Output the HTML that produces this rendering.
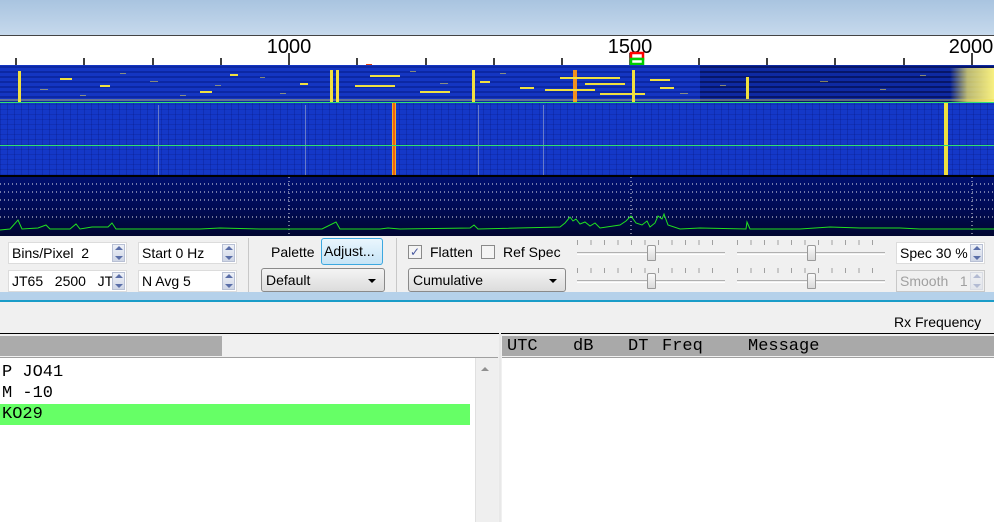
<!DOCTYPE html>
<html><head><meta charset="utf-8"><style>
*{margin:0;padding:0;box-sizing:border-box}
body{width:994px;height:522px;overflow:hidden;background:#f0f0f0;font-family:"Liberation Sans",sans-serif;position:relative}
.abs{position:absolute}
.sb{position:absolute;background:#fff;border:1px solid #dcdcdc;font-size:14px;line-height:20px;padding-left:3px;color:#000;height:22px}
.spin{position:absolute;right:1px;top:1px;width:13px;height:18px;background:linear-gradient(#eef1f8,#cfd6e6);border:1px solid #b8c0d4}
.spin:before{content:"";position:absolute;left:2px;top:1px;border:4px solid transparent;border-bottom:4px solid #5a6ea8;border-top:0}
.spin:after{content:"";position:absolute;left:2px;bottom:1px;border:4px solid transparent;border-top:4px solid #5a6ea8;border-bottom:0}
.combo{position:absolute;height:24px;border:1px solid #8a8a8a;border-radius:3px;background:linear-gradient(#f4f4f4,#dcdcdc);font-size:14px;line-height:22px;padding-left:4px}
.combo:after{content:"";position:absolute;right:8px;top:10px;border:4px solid transparent;border-top:4px solid #000;border-bottom:0}
.trk{position:absolute;height:3px;border-top:1px solid #b0b0b0;border-bottom:1px solid #fff;width:148px}
.thumb{position:absolute;width:9px;height:16px;background:linear-gradient(#fafafa,#dadada);border:1px solid #9a9a9a;border-radius:2px 2px 1px 1px}
.ticks{position:absolute;height:5px;width:148px;background:repeating-linear-gradient(90deg,#a0a0a0 0 1px,transparent 1px 13.5px)}
.mono{font-family:"Liberation Mono",monospace;font-size:17px}
</style></head><body>
<div class="abs" style="left:0;top:0;width:994px;height:35px;background:linear-gradient(#a9c4e0,#c6d9ec)"></div>
<div class="abs" style="left:0;top:35px;width:994px;height:30px;background:#fff;border-top:1px solid #444"></div>
<svg class="abs" style="left:0;top:35px" width="994" height="30">
<g stroke="#000" stroke-width="1.5">
<line x1="16" y1="23" x2="16" y2="30"/><line x1="84" y1="23" x2="84" y2="30"/><line x1="153" y1="23" x2="153" y2="30"/><line x1="221" y1="23" x2="221" y2="30"/><line x1="289" y1="18" x2="289" y2="30"/><line x1="357" y1="23" x2="357" y2="30"/><line x1="426" y1="23" x2="426" y2="30"/><line x1="494" y1="23" x2="494" y2="30"/><line x1="562" y1="23" x2="562" y2="30"/><line x1="630" y1="18" x2="630" y2="30"/><line x1="699" y1="23" x2="699" y2="30"/><line x1="767" y1="23" x2="767" y2="30"/><line x1="835" y1="23" x2="835" y2="30"/><line x1="904" y1="23" x2="904" y2="30"/><line x1="972" y1="18" x2="972" y2="30"/></g>
<g font-family="Liberation Sans" font-size="20" fill="#000" text-anchor="middle"><text x="289" y="18">1000</text><text x="630" y="18">1500</text><text x="971" y="18">2000</text></g>
<rect x="631" y="18" width="12" height="6" fill="#fff" stroke="#f00" stroke-width="2.5"/><rect x="631" y="24" width="12" height="5" fill="#fff" stroke="#0c0" stroke-width="2.5"/>
<rect x="366" y="29" width="6" height="2" fill="#e04010"/>
</svg>
<div class="abs" style="left:0;top:65px;width:994px;height:110px;background:#1438c8"></div>
<div class="abs" style="left:0;top:65px;width:994px;height:38px;background:repeating-linear-gradient(0deg,#0c28a4 0 2px,#1436c2 2px 5px)"></div>
<div class="abs" style="left:700px;top:65px;width:294px;height:38px;background:repeating-linear-gradient(0deg,#050e50 0 2px,#0c2494 2px 5px);opacity:.7"></div>
<div class="abs" style="left:0;top:103px;width:994px;height:72px;background:repeating-linear-gradient(90deg,rgba(0,0,80,.18) 0 1px,transparent 1px 7px),repeating-linear-gradient(0deg,rgba(0,0,80,.15) 0 1px,transparent 1px 5px)"></div>
<svg class="abs" style="left:0;top:65px" width="994" height="110">
<defs><linearGradient id="yb" x1="0" x2="1"><stop offset="0" stop-color="#e8e060" stop-opacity="0"/><stop offset=".4" stop-color="#e8e070" stop-opacity=".8"/><stop offset="1" stop-color="#f8f080"/></linearGradient></defs>
<rect x="950" y="3" width="44" height="35" fill="url(#yb)"/>
<g fill="#f0e040">
<rect x="18" y="6" width="3" height="32"/><rect x="330" y="5" width="3" height="32"/><rect x="336" y="5" width="3" height="33"/><rect x="472" y="5" width="3" height="33"/><rect x="573" y="5" width="4" height="32" fill="#f09020"/><rect x="632" y="5" width="3" height="32"/><rect x="746" y="12" width="3" height="22"/>
<rect x="560" y="12" width="60" height="2"/><rect x="585" y="18" width="40" height="2"/><rect x="545" y="24" width="50" height="2"/><rect x="600" y="28" width="45" height="2"/><rect x="355" y="20" width="40" height="2"/><rect x="370" y="10" width="30" height="2"/><rect x="420" y="26" width="30" height="2"/><rect x="60" y="13" width="12" height="2"/><rect x="100" y="20" width="10" height="2"/><rect x="200" y="26" width="12" height="2"/><rect x="230" y="9" width="8" height="2"/><rect x="480" y="16" width="10" height="2"/><rect x="520" y="22" width="14" height="2"/><rect x="650" y="14" width="20" height="2"/><rect x="660" y="22" width="14" height="2"/><rect x="300" y="18" width="8" height="2"/>
<rect x="0" y="34" width="994" height="2" opacity=".35"/>
<rect x="944" y="38" width="4" height="72"/>
</g>
<g fill="#e8d850" opacity=".55">
<rect x="120" y="8" width="6" height="1"/><rect x="150" y="16" width="8" height="1"/><rect x="180" y="30" width="6" height="1"/><rect x="260" y="12" width="5" height="1"/><rect x="40" y="24" width="8" height="1"/><rect x="80" y="30" width="6" height="1"/><rect x="410" y="6" width="6" height="1"/><rect x="440" y="18" width="8" height="1"/><rect x="500" y="8" width="6" height="1"/><rect x="680" y="28" width="8" height="1"/><rect x="720" y="20" width="6" height="1"/><rect x="820" y="16" width="8" height="1"/><rect x="880" y="24" width="6" height="1"/><rect x="920" y="10" width="6" height="1"/><rect x="280" y="28" width="6" height="1"/><rect x="215" y="20" width="6" height="1"/>
</g>
<rect x="392" y="38" width="4" height="72" fill="#f0b020"/><rect x="393" y="38" width="2" height="72" fill="#f06010"/>
<g fill="#a0a8c8" opacity=".6"><rect x="158" y="40" width="1" height="70"/><rect x="305" y="40" width="1" height="70"/><rect x="543" y="40" width="1" height="70"/><rect x="478" y="40" width="1" height="70"/></g>
<rect x="0" y="37" width="994" height="1" fill="#30e070"/><rect x="0" y="80" width="994" height="1" fill="#30e070"/>
</svg>
<div class="abs" style="left:0;top:175px;width:994px;height:2px;background:#000"></div>
<div class="abs" style="left:0;top:177px;width:994px;height:59px;background:linear-gradient(#001070,#000a50 60%,#000630)"></div>
<svg class="abs" style="left:0;top:177px" width="994" height="59">
<g stroke="#fff" stroke-dasharray="1 3" stroke-width="1" opacity=".9"><line x1="0" y1="7" x2="994" y2="7"/><line x1="0" y1="15" x2="994" y2="15"/><line x1="0" y1="23" x2="994" y2="23"/><line x1="0" y1="32" x2="994" y2="32"/><line x1="0" y1="40" x2="994" y2="40"/><line x1="289" y1="0" x2="289" y2="59"/><line x1="631" y1="0" x2="631" y2="59"/><line x1="972" y1="0" x2="972" y2="59"/></g>
<polyline fill="none" stroke="#20e020" stroke-width="1" points="0,53 10,52 18,43 22,52 38,51 46,48 50,52 70,52 76,47 80,52 92,50 108,50 112,46 116,52 200,52 220,51 260,52 300,52 322,52 336,45 340,52 380,52 388,51 400,52 470,51 474,48 478,52 560,50 565,46 570,40 573,44 576,42 580,47 585,45 590,49 595,46 600,51 620,48 626,44 631,39 636,46 642,48 647,44 650,50 655,46 658,39 662,42 664,37 668,48 680,52 700,51 746,52 747,45 750,52 800,52 830,50 860,51 900,51 920,52 994,52"/>
</svg>
<div class="abs" style="left:248px;top:238px;width:1px;height:54px;background:#c8c8c8"></div>
<div class="abs" style="left:396px;top:238px;width:1px;height:54px;background:#c8c8c8"></div>
<div class="sb" style="left:8px;top:242px;width:119px">Bins/Pixel&nbsp; 2<div class="spin"></div></div>
<div class="sb" style="left:8px;top:270px;width:119px;overflow:hidden;white-space:nowrap">JT65&nbsp;&nbsp; 2500&nbsp;&nbsp; JT<div class="spin"></div></div>
<div class="sb" style="left:138px;top:242px;width:99px">Start 0 Hz<div class="spin"></div></div>
<div class="sb" style="left:138px;top:270px;width:99px">N Avg 5<div class="spin"></div></div>
<div class="abs" style="left:271px;top:244px;font-size:14px">Palette</div>
<div class="abs" style="left:321px;top:238px;width:62px;height:27px;border:1px solid #3ca8e0;border-radius:3px;background:linear-gradient(#eaf6fd,#c6e4f6);font-size:14px;line-height:25px;padding-left:2px">Adjust...</div>
<div class="combo" style="left:261px;top:268px;width:124px">Default</div>
<div class="abs" style="left:408px;top:245px;width:14px;height:14px;border:1px solid #8a8a8a;background:#f4f4f4;font-size:12px;line-height:12px;color:#4a5aa0;text-align:center">✓</div>
<div class="abs" style="left:430px;top:244px;font-size:14px">Flatten</div>
<div class="abs" style="left:481px;top:245px;width:14px;height:14px;border:1px solid #8a8a8a;background:#f4f4f4"></div>
<div class="abs" style="left:503px;top:244px;font-size:14px">Ref Spec</div>
<div class="combo" style="left:408px;top:268px;width:158px">Cumulative</div>
<div class="ticks" style="left:577px;top:240px"></div><div class="trk" style="left:577px;top:252px"></div><div class="thumb" style="left:647px;top:245px"></div>
<div class="ticks" style="left:737px;top:240px"></div><div class="trk" style="left:737px;top:252px"></div><div class="thumb" style="left:807px;top:245px"></div>
<div class="ticks" style="left:577px;top:268px"></div><div class="trk" style="left:577px;top:280px"></div><div class="thumb" style="left:647px;top:273px"></div>
<div class="ticks" style="left:737px;top:268px"></div><div class="trk" style="left:737px;top:280px"></div><div class="thumb" style="left:807px;top:273px"></div>
<div class="sb" style="left:896px;top:242px;width:89px">Spec 30 %<div class="spin"></div></div>
<div class="sb" style="left:896px;top:270px;width:89px;background:#f0f0f0;color:#a0a0a0;border-color:#c8c8c8">Smooth&nbsp;&nbsp; 1<div class="spin" style="opacity:.4"></div></div>
<div class="abs" style="left:0;top:292px;width:994px;height:8px;background:#b5d1ea"></div>
<div class="abs" style="left:0;top:300px;width:994px;height:2px;background:#1a9cc8"></div>
<div class="abs" style="left:894px;top:314px;font-size:14px">Rx Frequency</div>
<div class="abs" style="left:0;top:333px;width:994px;height:1px;background:#000"></div>
<div class="abs" style="left:0;top:336px;width:222px;height:20px;background:#ababab"></div>
<div class="abs" style="left:0;top:357px;width:498px;height:1px;background:#a0a0a0"></div>
<div class="abs" style="left:0;top:358px;width:475px;height:164px;background:#fff"></div>
<div class="abs" style="left:475px;top:358px;width:23px;height:164px;background:#efefef;border-left:1px solid #e0e0e0"></div>
<div class="abs" style="left:481px;top:367px;border:4px solid transparent;border-bottom:4px solid #909090;border-top:0"></div>
<div class="abs" style="left:0;top:404px;width:470px;height:21px;background:#66ff66"></div>
<div class="abs mono" style="left:2px;top:362px;line-height:21px;color:#000">P JO41<br>M -10<br>KO29</div>
<div class="abs" style="left:499px;top:333px;width:2px;height:189px;background:#e8e8e8"></div>
<div class="abs" style="left:502px;top:336px;width:492px;height:20px;background:#a9a9a9"></div>
<div class="abs mono" style="left:507px;top:337px;line-height:20px">UTC</div>
<div class="abs mono" style="left:573px;top:337px;line-height:20px">dB</div>
<div class="abs mono" style="left:628px;top:337px;line-height:20px">DT</div>
<div class="abs mono" style="left:662px;top:337px;line-height:20px">Freq</div>
<div class="abs mono" style="left:748px;top:337px;line-height:20px">Message</div>
<div class="abs" style="left:502px;top:357px;width:492px;height:165px;background:#fff;border-top:1px solid #a0a0a0"></div>
</body></html>
